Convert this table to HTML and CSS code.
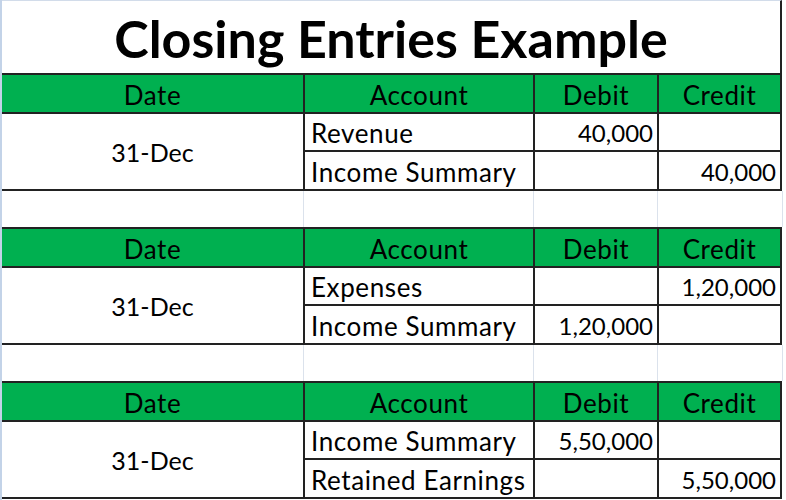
FILE: index.html
```html
<!DOCTYPE html>
<html>
<head>
<meta charset="utf-8">
<link rel="stylesheet" href="styles.css">
</head>
<body>
<div class="sheet">
  <div class="title">Closing Entries Example</div>

  <div class="entry">
    <div class="cell head">Date</div>
    <div class="cell head">Account</div>
    <div class="cell head">Debit</div>
    <div class="cell head">Credit</div>
    <div class="cell date">31-Dec</div>
    <div class="cell acct">Revenue</div>
    <div class="cell num">40,000</div>
    <div class="cell num"></div>
    <div class="cell acct">Income Summary</div>
    <div class="cell num"></div>
    <div class="cell num">40,000</div>
  </div>

  <div class="blank"><span></span><span></span><span></span><span></span></div>

  <div class="entry">
    <div class="cell head">Date</div>
    <div class="cell head">Account</div>
    <div class="cell head">Debit</div>
    <div class="cell head">Credit</div>
    <div class="cell date">31-Dec</div>
    <div class="cell acct">Expenses</div>
    <div class="cell num"></div>
    <div class="cell num">1,20,000</div>
    <div class="cell acct">Income Summary</div>
    <div class="cell num">1,20,000</div>
    <div class="cell num"></div>
  </div>

  <div class="blank"><span></span><span></span><span></span><span></span></div>

  <div class="entry">
    <div class="cell head">Date</div>
    <div class="cell head">Account</div>
    <div class="cell head">Debit</div>
    <div class="cell head">Credit</div>
    <div class="cell date">31-Dec</div>
    <div class="cell acct">Income Summary</div>
    <div class="cell num">5,50,000</div>
    <div class="cell num"></div>
    <div class="cell acct">Retained Earnings</div>
    <div class="cell num"></div>
    <div class="cell num">5,50,000</div>
  </div>
</div>
</body>
</html>
```

FILE: styles.css
```css
html, body {
  margin: 0;
  padding: 0;
  background: #ffffff;
}

.sheet {
  width: 786px;
  height: 500px;
  overflow: hidden;
  box-sizing: border-box;
  border-left: 2px solid #c3d3e8;
  display: flex;
  flex-direction: column;
  font-family: Lato, "Open Sans", sans-serif;
  color: #000;
}

.title {
  width: 780px;
  height: 73px;
  box-sizing: border-box;
  border-top: 1px solid #d2dcea;
  border-right: 2px solid #222;
  display: flex;
  align-items: center;
  justify-content: center;
  font-weight: 700;
  font-size: 52px;
  padding-top: 2px;
  flex: none;
}

.entry {
  width: 780px;
  box-sizing: border-box;
  display: grid;
  grid-template-columns: 301px 228px 122px 121px;
  grid-template-rows: 36.5px 36.5px 36.5px;
  gap: 2px;
  padding: 2px 2px 2px 0;
  background: #222;
  flex: none;
}

.cell {
  background: #fff;
  font-size: 26px;
  letter-spacing: 0.6px;
  line-height: 1;
  display: flex;
  align-items: center;
  padding-top: 3px;
  box-sizing: border-box;
  white-space: nowrap;
}

.head {
  background: #00b050;
  justify-content: center;
}

.date {
  grid-row: 2 / span 2;
  grid-column: 1;
  justify-content: center;
  font-size: 25px;
  letter-spacing: 0;
}

.acct {
  padding-left: 6px;
}

.num {
  justify-content: flex-end;
  padding-right: 4px;
  font-size: 24px;
  letter-spacing: 0;
}

.blank {
  width: 781px;
  height: 36.5px;
  display: grid;
  grid-template-columns: 302px 230px 124px 125px;
  flex: none;
}

.blank span {
  border-right: 1px solid #dbe2ec;
}
```
